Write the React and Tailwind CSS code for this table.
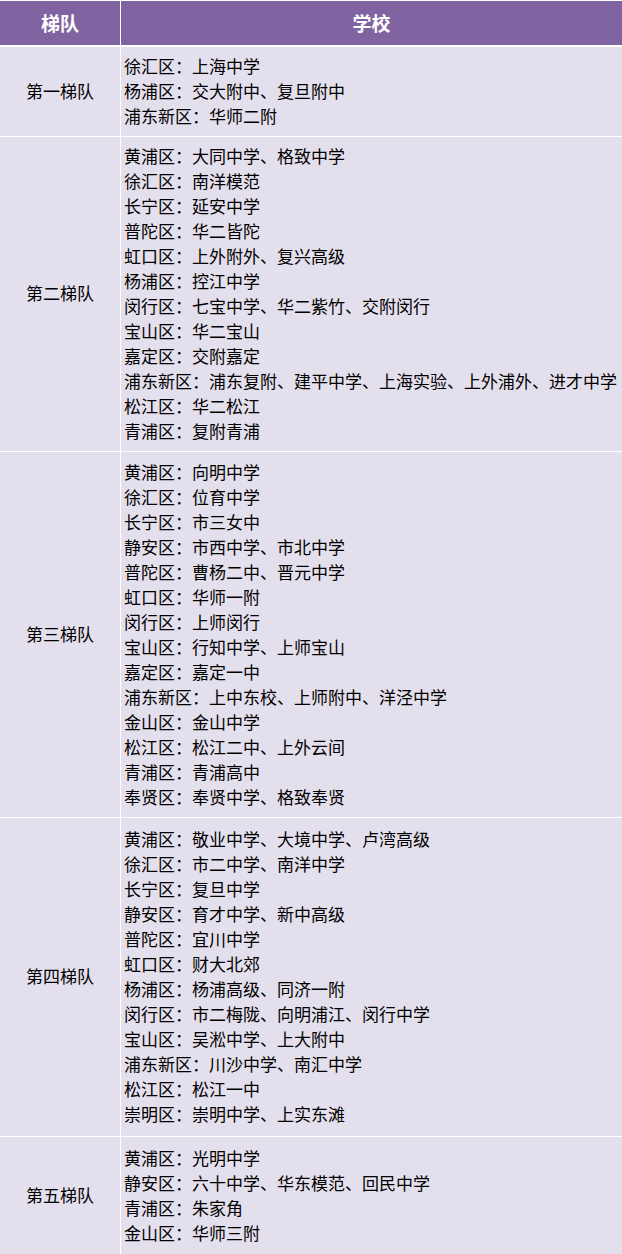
const rows = [
  {
    name: "第一梯队",
    h: "h-[89px]",
    lines: ["徐汇区：上海中学", "杨浦区：交大附中、复旦附中", "浦东新区：华师二附"],
  },
  {
    name: "第二梯队",
    h: "h-[314px]",
    lines: [
      "黄浦区：大同中学、格致中学",
      "徐汇区：南洋模范",
      "长宁区：延安中学",
      "普陀区：华二皆陀",
      "虹口区：上外附外、复兴高级",
      "杨浦区：控江中学",
      "闵行区：七宝中学、华二紫竹、交附闵行",
      "宝山区：华二宝山",
      "嘉定区：交附嘉定",
      "浦东新区：浦东复附、建平中学、上海实验、上外浦外、进才中学",
      "松江区：华二松江",
      "青浦区：复附青浦",
    ],
  },
  {
    name: "第三梯队",
    h: "h-[365px]",
    lines: [
      "黄浦区：向明中学",
      "徐汇区：位育中学",
      "长宁区：市三女中",
      "静安区：市西中学、市北中学",
      "普陀区：曹杨二中、晋元中学",
      "虹口区：华师一附",
      "闵行区：上师闵行",
      "宝山区：行知中学、上师宝山",
      "嘉定区：嘉定一中",
      "浦东新区：上中东校、上师附中、洋泾中学",
      "金山区：金山中学",
      "松江区：松江二中、上外云间",
      "青浦区：青浦高中",
      "奉贤区：奉贤中学、格致奉贤",
    ],
  },
  {
    name: "第四梯队",
    h: "h-[318px]",
    lines: [
      "黄浦区：敬业中学、大境中学、卢湾高级",
      "徐汇区：市二中学、南洋中学",
      "长宁区：复旦中学",
      "静安区：育才中学、新中高级",
      "普陀区：宜川中学",
      "虹口区：财大北郊",
      "杨浦区：杨浦高级、同济一附",
      "闵行区：市二梅陇、向明浦江、闵行中学",
      "宝山区：吴淞中学、上大附中",
      "浦东新区：川沙中学、南汇中学",
      "松江区：松江一中",
      "崇明区：崇明中学、上实东滩",
    ],
  },
  {
    name: "第五梯队",
    h: "h-[117px]",
    lines: [
      "黄浦区：光明中学",
      "静安区：六十中学、华东模范、回民中学",
      "青浦区：朱家角",
      "金山区：华师三附",
    ],
  },
];

export default function App() {
  return (
    <div className="w-[622px] bg-white pt-px font-['Noto_Sans_CJK_SC','Noto_Sans',sans-serif] text-[17px] text-black">
      {/* 表头 */}
      <div className="grid h-[44px] grid-cols-[120px_1fr] gap-x-px text-[19px] font-bold text-white">
        <div className="flex items-center justify-center bg-[#8064a2]">梯队</div>
        <div className="flex items-center justify-center bg-[#8064a2]">学校</div>
      </div>

      <div className="mt-[2px] flex flex-col gap-px">
        {rows.map((row) => (
          <div key={row.name} className={`grid grid-cols-[120px_1fr] gap-x-px ${row.h}`}>
            <div className="flex items-center justify-center bg-[#e4dfec] pb-[2px]">{row.name}</div>
            <div className="flex flex-col justify-center bg-[#e4dfec] pb-[2px] pl-[3px] leading-[25px] whitespace-nowrap">
              {row.lines.map((line) => (
                <div key={line}>{line}</div>
              ))}
            </div>
          </div>
        ))}
      </div>
    </div>
  );
}
